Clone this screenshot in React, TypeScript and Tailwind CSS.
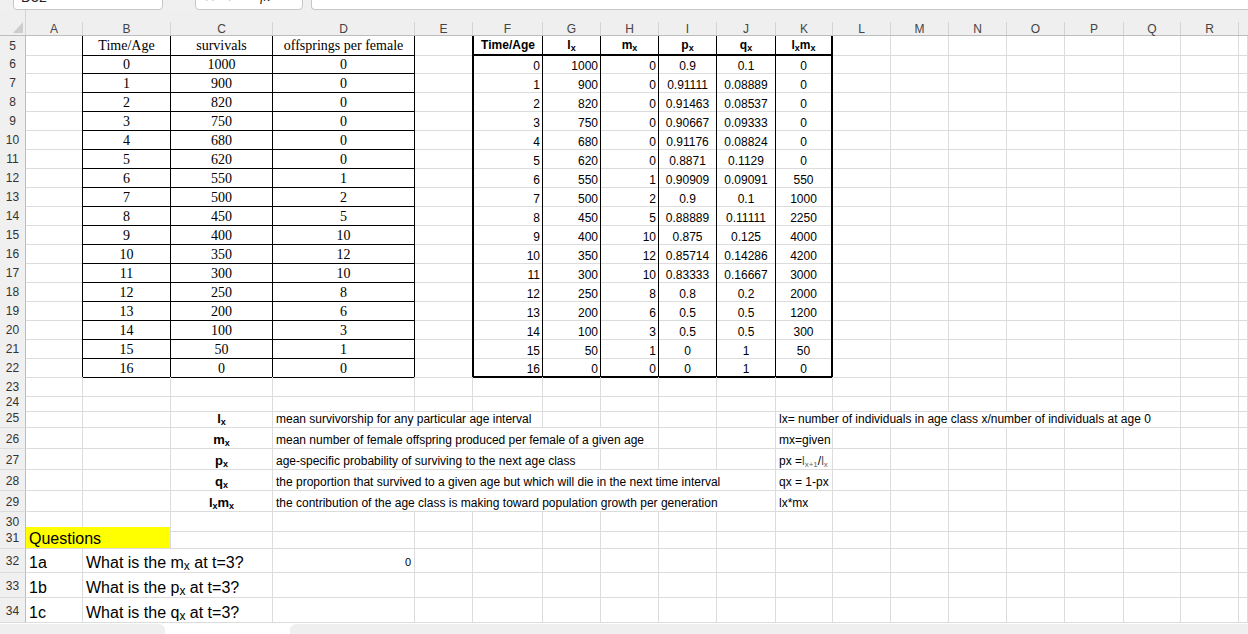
import type { ReactNode } from "react";

const GRID =
  "grid grid-cols-[26px_57px_88px_102px_142px_58px_70px_58px_58px_58px_59px_57px_58px_58px_58px_58px_59px_57px_58px_1fr]";

const LETTERS = ["A", "B", "C", "D", "E", "F", "G", "H", "I", "J", "K", "L", "M", "N", "O", "P", "Q", "R"];

type Edge = "g" | "k" | "k2";

const RIGHT: Record<Edge, string> = {
  g: "border-r border-r-[#dcdcdc]",
  k: "border-r border-r-black",
  k2: "border-r-2 border-r-black",
};

const BOTTOM: Record<Edge, string> = {
  g: "border-b border-b-[#dcdcdc]",
  k: "border-b border-b-black",
  k2: "border-b-2 border-b-black",
};

const SPAN: Record<number, string> = {
  1: "",
  2: "col-span-2",
  3: "col-span-3",
  4: "col-span-4",
  5: "col-span-5",
  7: "col-span-7",
};

type Cell = { span?: number; content?: ReactNode; cls?: string; r?: Edge; b?: Edge; l?: boolean };
type Row = { n: number; h: string; cells: Record<number, Cell> };

const serif = "items-end justify-center font-['Liberation_Serif',serif] text-[14px] leading-[16px]";
const numR = "items-end justify-end pr-[2px] text-[12px] leading-[14px]";
const numC = "items-end justify-center text-[12px] leading-[14px]";
const head = "items-end justify-center pb-[2px] text-[12px] leading-[14px] font-bold";
const label = "items-end justify-center pb-[1px] text-[13px] leading-[15px] font-bold";
const desc = "items-end pl-[3px] pb-[1px] text-[12px] leading-[14px]";
const question = "items-end pl-[3px] text-[16px] leading-[18px]";

const ages = Array.from({ length: 17 }, (_, i) => i);
const survivals = [1000, 900, 820, 750, 680, 620, 550, 500, 450, 400, 350, 300, 250, 200, 100, 50, 0];
const offspring = [0, 0, 0, 0, 0, 0, 1, 2, 5, 10, 12, 10, 8, 6, 3, 1, 0];
const px = ["0.9", "0.91111", "0.91463", "0.90667", "0.91176", "0.8871", "0.90909", "0.9", "0.88889", "0.875", "0.85714", "0.83333", "0.8", "0.5", "0.5", "0", "0"];
const qx = ["0.1", "0.08889", "0.08537", "0.09333", "0.08824", "0.1129", "0.09091", "0.1", "0.11111", "0.125", "0.14286", "0.16667", "0.2", "0.5", "0.5", "1", "1"];
const lxmx = [0, 0, 0, 0, 0, 0, 550, 1000, 2250, 4000, 4200, 3000, 2000, 1200, 300, 50, 0];

// subscript x, kept out of the line box so the row baseline doesn't move
function X({ c = "x", cls = "text-[9px]" }: { c?: string; cls?: string }) {
  return <span className={`align-[-2px] leading-[0] ${cls}`}>{c}</span>;
}

const rows: Row[] = [
  {
    n: 5,
    h: "h-[18px]",
    cells: {
      0: { r: "k" },
      1: { r: "k", b: "k", content: "Time/Age", cls: `${serif} pb-[1px]` },
      2: { r: "k", b: "k", content: "survivals", cls: `${serif} pb-[1px]` },
      3: { r: "k", b: "k", content: "offsprings per female", cls: `${serif} pb-[1px]` },
      4: { r: "k" },
      5: { l: true, r: "k", b: "k2", content: "Time/Age", cls: head },
      6: { r: "k", b: "k2", content: <>l<X /></>, cls: head },
      7: { r: "k", b: "k2", content: <>m<X /></>, cls: head },
      8: { r: "k", b: "k2", content: <>p<X /></>, cls: head },
      9: { r: "k", b: "k2", content: <>q<X /></>, cls: head },
      10: { r: "k2", b: "k2", content: <>l<X />m<X /></>, cls: head },
    },
  },
  ...ages.map((i) => {
    const last = i === 16;
    return {
      n: 6 + i,
      h: "h-[19px]",
      cells: {
        0: { r: "k" },
        1: { r: "k", b: "k", content: i, cls: serif },
        2: { r: "k", b: "k", content: survivals[i], cls: serif },
        3: { r: "k", b: "k", content: offspring[i], cls: serif },
        4: { r: "k" },
        5: { l: true, r: "k", b: last ? "k2" : "g", content: i, cls: numR },
        6: { r: "k", b: last ? "k2" : "g", content: survivals[i], cls: numR },
        7: { r: "k", b: last ? "k2" : "g", content: offspring[i], cls: numR },
        8: { r: "k", b: last ? "k2" : "g", content: px[i], cls: numC },
        9: { r: "k", b: last ? "k2" : "g", content: qx[i], cls: numC },
        10: { r: "k2", b: last ? "k2" : "g", content: lxmx[i], cls: numC },
      },
    } as Row;
  }),
  { n: 23, h: "h-[15px]", cells: {} },
  { n: 24, h: "h-[15px]", cells: {} },
  {
    n: 25,
    h: "h-[21px]",
    cells: {
      2: { content: <>l<X /></>, cls: label },
      3: { span: 3, content: "mean survivorship for any particular age interval", cls: desc },
      10: { span: 7, content: "lx= number of individuals in age class x/number of individuals at age 0", cls: desc },
    },
  },
  {
    n: 26,
    h: "h-[21px]",
    cells: {
      2: { content: <>m<X /></>, cls: label },
      3: { span: 5, content: "mean number of female offspring produced per female of a given age", cls: desc },
      10: { content: "mx=given", cls: desc },
    },
  },
  {
    n: 27,
    h: "h-[21px]",
    cells: {
      2: { content: <>p<X /></>, cls: label },
      3: { span: 4, content: "age-specific probability of surviving to the next age class", cls: desc },
      10: {
        content: (
          <>
            px =<span className="text-[#555]">l</span>
            <X c="x+1" cls="text-[8px] text-[#666]" />/<span className="text-[#555]">l</span>
            <X cls="text-[8px] text-[#666]" />
          </>
        ),
        cls: desc,
      },
    },
  },
  {
    n: 28,
    h: "h-[21px]",
    cells: {
      2: { content: <>q<X /></>, cls: label },
      3: { span: 7, content: "the proportion that survived to a given age but which will die in the next time interval", cls: desc },
      10: { content: "qx = 1-px", cls: desc },
    },
  },
  {
    n: 29,
    h: "h-[21px]",
    cells: {
      2: { content: <>l<X />m<X /></>, cls: label },
      3: { span: 7, content: "the contribution of the age class is making toward population growth per generation", cls: desc },
      10: { content: "lx*mx", cls: desc },
    },
  },
  { n: 30, h: "h-[15px]", cells: {} },
  {
    n: 31,
    h: "h-[22px]",
    cells: {
      0: { span: 2, content: "Questions", cls: `${question} bg-[#ffff00]` },
    },
  },
  {
    n: 32,
    h: "h-[24px]",
    cells: {
      0: { content: "1a", cls: question },
      1: { span: 2, content: <>What is the m<X cls="text-[12px]" /> at t=3?</>, cls: question },
      3: { content: "0", cls: "items-end justify-end pr-[3px] pb-[3px] text-[11px] leading-[13px]" },
    },
  },
  {
    n: 33,
    h: "h-[25px]",
    cells: {
      0: { content: "1b", cls: question },
      1: { span: 2, content: <>What is the p<X cls="text-[12px]" /> at t=3?</>, cls: question },
    },
  },
  {
    n: 34,
    h: "h-[25px]",
    cells: {
      0: { content: "1c", cls: question },
      1: { span: 2, content: <>What is the q<X cls="text-[12px]" /> at t=3?</>, cls: question },
    },
  },
];

function SheetRow({ row }: { row: Row }) {
  const out: ReactNode[] = [
    <div
      key="hdr"
      className="flex items-center justify-center border-r border-b border-r-[#bdbdbd] border-b-[#dcdcdc] bg-[#f0f0f0] pt-[1px] text-[12px] text-[#333]"
    >
      {row.n}
    </div>,
  ];
  for (let c = 0; c < 19; ) {
    const cell = row.cells[c] ?? {};
    const span = cell.span ?? 1;
    out.push(
      <div
        key={c}
        className={[
          "flex min-w-0 whitespace-nowrap text-black",
          SPAN[span],
          RIGHT[cell.r ?? "g"],
          BOTTOM[cell.b ?? "g"],
          cell.l ? "border-l border-l-black" : "",
          cell.cls ?? "",
        ].join(" ")}
      >
        {cell.content !== undefined ? <span>{cell.content}</span> : null}
      </div>,
    );
    c += span;
  }
  return <div className={`${GRID} ${row.h}`}>{out}</div>;
}

export default function App() {
  return (
    <div className="h-[634px] w-[1248px] overflow-hidden bg-white font-['Liberation_Sans',Arial,sans-serif]">
      {/* formula bar, mostly scrolled off */}
      <div className="flex h-[10px] items-end overflow-hidden bg-[#f0f0f0]">
        <div className="ml-[13px] flex h-[20px] w-[150px] shrink-0 items-start rounded-[4px] border border-[#c6c6c6] bg-white pl-[7px] text-[14px] leading-[12px] text-[#222]">
          D32
        </div>
        <div className="ml-[13px] flex h-[20px] w-[8px] shrink-0 items-start text-[12px] leading-[11px] text-[#333]">
          ⌄
        </div>
        <div className="ml-[11px] flex h-[20px] w-[108px] shrink-0 items-start gap-[10px] rounded-[4px] border border-[#c6c6c6] bg-white pl-[8px] text-[14px] leading-[12px]">
          <span className="text-[#bbb]">✕</span>
          <span className="text-[#bbb]">✓</span>
          <span className="ml-[12px] font-['Liberation_Serif',serif] italic text-[#222]">fx</span>
        </div>
        <div className="ml-[8px] h-[20px] flex-1 rounded-l-[4px] border border-r-0 border-[#c6c6c6] bg-white" />
      </div>

      {/* column letters */}
      <div className={`${GRID} h-[26px] border-b border-b-[#bdbdbd] bg-[#efefef]`}>
        <div className="flex items-end justify-end border-r border-r-[#d4d4d4] pr-[2px] pb-[2px]">
          <svg width="10" height="11" viewBox="0 0 10 11">
            <polygon points="10,0 10,11 0,11" fill="#cdcdcd" />
          </svg>
        </div>
        {LETTERS.map((l) => (
          <div
            key={l}
            className="mt-[12px] flex items-center justify-center border-r border-r-[#d4d4d4] pt-[1px] text-[12px] leading-[12px] text-[#444]"
          >
            {l}
          </div>
        ))}
        <div className="mt-[12px]" />
      </div>

      {rows.map((row) => (
        <SheetRow key={row.n} row={row} />
      ))}

      {/* tab strip / scrollbar */}
      <div className="flex h-[11px] pt-[1px]">
        <div className="w-[165px] rounded-tr-[6px] bg-[#efefef]" />
        <div className="ml-[125px] flex-1 rounded-tl-[6px] bg-[#efefef]" />
      </div>
    </div>
  );
}
